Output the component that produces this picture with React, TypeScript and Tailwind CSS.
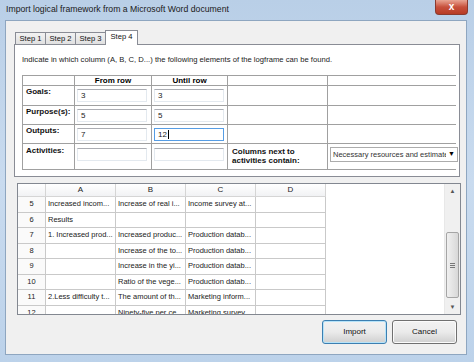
import React, { FC } from 'react';

const font = "font-['Liberation_Sans',Arial,sans-serif]";

interface ITextBoxProps {
    value?: string;
    focused?: boolean;
}

const TextBox: FC<ITextBoxProps> = ({ value, focused }) => (
    <div
        className={(focused
            ? 'border-[#569de5]'
            : 'border-[#e3e9ef] border-t-[#abadb3]') +
            ' h-[13px] w-[70px] border bg-white px-[3px] text-[8px] leading-[11px] text-[#222]'}>
        {value}
        {focused && <span className="inline-block w-px h-[9px] bg-black align-middle ml-px" />}
    </div>
);

const steps = ['Step 1', 'Step 2', 'Step 3'];

const rows: [string, string, string, string, string][] = [
    ['5', 'Increased incom...', 'Increase of real i...', 'Income survey at...', ''],
    ['6', 'Results', '', '', ''],
    ['7', '1. Increased prod...', 'Increased produc...', 'Production datab...', ''],
    ['8', '', 'Increase of the to...', 'Production datab...', ''],
    ['9', '', 'Increase in the yi...', 'Production datab...', ''],
    ['10', '', 'Ratio of the vege...', 'Production datab...', ''],
    ['11', '2.Less difficulty t...', 'The amount of th...', 'Marketing inform...', ''],
    ['12', '', 'Ninety-five per ce...', 'Marketing survey...', ''],
];

const Button: FC<{ label: string; isDefault?: boolean }> = ({ label, isDefault }) => (
    <button
        className={(isDefault ? 'border-[#3c7fb1] shadow-[inset_0_0_0_1px_#b6e3f9]' : 'border-[#707070] shadow-[inset_0_0_0_1px_#fbfbfb]') +
            ' w-[65px] h-[24px] rounded-[3px] border text-[8px] text-[#111] bg-gradient-to-b from-[#f2f2f2] via-[#ebebeb] to-[#cfcfcf]'}>
        {label}
    </button>
);

export default function App() {
    return (
        <div className={font + ' w-[474px] h-[362px] overflow-hidden bg-gradient-to-b from-[#b9cfe7] via-[#c9dbef] to-[#bcd2ea] relative'}>
            {/* title bar */}
            <div className="h-[20px] flex items-center pl-[6px] text-[8.7px] text-[#1a1a1a]">
                Import logical framework from a Microsoft Word document
            </div>
            <div className="absolute top-0 right-[6px] w-[33px] h-[15px] rounded-b-[4px] border border-t-0 border-[#8b3a2e] bg-gradient-to-b from-[#e8a493] via-[#c7503c] to-[#b73b24] flex items-center justify-center">
                <span className="text-white text-[10px] font-bold leading-none">x</span>
            </div>

            {/* client area */}
            <div className="ml-[5px] w-[462px] h-[335px] bg-[#f0f0f0] border border-[#8ea6c0] flex flex-col">
                {/* tabs */}
                <div className="flex items-end ml-[9px] mt-[8px] h-[15px]">
                    {steps.map(s => (
                        <div key={s}
                             className="h-[12px] w-[31px] text-center border border-b-0 border-[#898c95] -ml-px first:ml-0 bg-gradient-to-b from-[#f2f2f2] to-[#e0e0e0] text-[7.6px] leading-[11px] text-[#111]">
                            {s}
                        </div>
                    ))}
                    <div className="h-[15px] w-[33px] text-center border border-b-0 border-[#898c95] -ml-px bg-white text-[7.6px] leading-[12px] text-[#111] relative top-px z-10">
                        Step 4
                    </div>
                </div>

                {/* tab page */}
                <div className="ml-[8px] w-[446px] h-[133px] border border-[#898c95] bg-white px-[7px] pt-[10px]">
                    <div className="text-[7.65px] leading-[10px] text-[#222]">
                        Indicate in which column (A, B, C, D...) the following elements of the logframe can be found.
                    </div>
                    <div className="mt-[10px] grid grid-cols-[51px_76px_75px_99px_128px] grid-rows-[9px_19px_18px_18px_25px] gap-px bg-[#a0a0a0] p-px w-[434px]">
                        <div className="bg-white" />
                        <div className="bg-white text-[8px] leading-[9px] font-bold text-center">From row</div>
                        <div className="bg-white text-[8px] leading-[9px] font-bold text-center">Until row</div>
                        <div className="bg-white" />
                        <div className="bg-white" />

                        {[
                            ['Goals:', '3', '3'],
                            ['Purpose(s):', '5', '5'],
                            ['Outputs:', '7', '12'],
                        ].map(([label, from, until], i) => (
                            <React.Fragment key={label}>
                                <div className="bg-white text-[8px] font-bold pl-[3px] pt-[1px] leading-[10px] text-[#111]">{label}</div>
                                <div className="bg-white flex items-center pl-[2px]"><TextBox value={from} /></div>
                                <div className="bg-white flex items-center pl-[2px]"><TextBox value={until} focused={i === 2} /></div>
                                <div className="bg-white" />
                                <div className="bg-white" />
                            </React.Fragment>
                        ))}

                        <div className="bg-white text-[8px] font-bold pl-[3px] pt-[2px] leading-[10px] text-[#111]">Activities:</div>
                        <div className="bg-white pl-[2px] pt-[4px]"><TextBox /></div>
                        <div className="bg-white pl-[2px] pt-[4px]"><TextBox /></div>
                        <div className="bg-white text-[8px] font-bold pl-[4px] pt-[3px] leading-[9px] text-[#111]">
                            Columns next to<br />activities contain:
                        </div>
                        <div className="bg-white pl-[2px] pt-[3px]">
                            <div className="w-[128px] h-[15px] border border-[#acacac] bg-white flex items-center pl-[2px] text-[7.5px] text-[#333] overflow-hidden">
                                <span className="flex-1 whitespace-nowrap overflow-hidden">Necessary resources and estimate</span>
                                <span className="w-[11px] text-[7px] text-center text-black">▼</span>
                            </div>
                        </div>
                    </div>
                </div>

                {/* data grid */}
                <div className="ml-[11px] mt-[6px] w-[444px] h-[132px] border border-[#828790] bg-white flex overflow-hidden">
                    <div className="flex-1 overflow-hidden">
                        <div className="flex h-[13px]">
                            {['', 'A', 'B', 'C', 'D'].map((h, i) => (
                                <div key={i}
                                     className={(i === 0 ? 'w-[28px]' : 'w-[70px]') + ' shrink-0 border-r border-b border-[#d5d5d5] bg-gradient-to-b from-white to-[#f1f2f4] text-[8px] leading-[12px] text-center text-[#222]'}>
                                    {h}
                                </div>
                            ))}
                        </div>
                        {rows.map(r => (
                            <div key={r[0]} className="flex h-[15.5px]">
                                {r.map((c, i) => (
                                    <div key={i}
                                         className={(i === 0 ? 'w-[28px] text-center bg-[#fafafa]' : 'w-[70px] pl-[2px]') + ' shrink-0 border-r border-b border-[#c9c9c9] text-[7.5px] leading-[14px] text-[#222] whitespace-nowrap overflow-hidden'}>
                                        {c}
                                    </div>
                                ))}
                            </div>
                        ))}
                    </div>
                    {/* scrollbar */}
                    <div className="w-[16px] h-full bg-[#f0f0f0] border-l border-[#e8e8e8] flex flex-col items-center">
                        <div className="h-[14px] text-[6px] leading-[14px] text-[#555]">▲</div>
                        <div className="mt-[34px] w-[13px] h-[66px] rounded-[2px] border border-[#a5a5a5] bg-gradient-to-r from-[#f0f0f0] to-[#d8d8d8] flex items-center justify-center">
                            <div className="flex flex-col gap-px">
                                <div className="w-[5px] h-px bg-[#777]" />
                                <div className="w-[5px] h-px bg-[#777]" />
                                <div className="w-[5px] h-px bg-[#777]" />
                            </div>
                        </div>
                        <div className="mt-auto h-[14px] text-[6px] leading-[14px] text-[#555]">▼</div>
                    </div>
                </div>

                {/* buttons */}
                <div className="flex justify-end gap-[5px] pr-[9px] mt-[5px]">
                    <Button label="Import" isDefault />
                    <Button label="Cancel" />
                </div>
            </div>
        </div>
    );
}
